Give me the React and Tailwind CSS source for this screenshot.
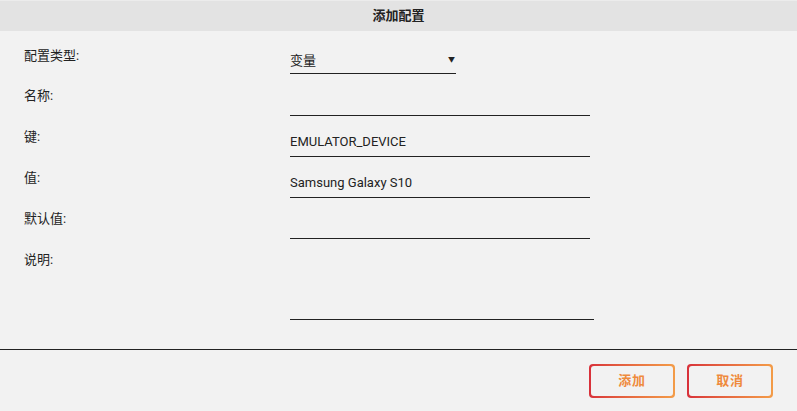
import React, { useState } from 'react'

const font = { fontFamily: 'Roboto, "Noto Sans CJK SC", sans-serif' }

const Field = ({ label, children, rowClass = 'h-[41px]' }) => (
  <div className={`flex ${rowClass}`}>
    <div className="w-[266px] pt-[1px] text-[13px] text-[#222]">{label}</div>
    <div className="flex-1">{children}</div>
  </div>
)

const TextInput = ({ value }) => (
  <div className="mt-[5px] w-[300px] h-[26px] border-b-[1.5px] border-[#222] flex items-end pb-[5px] text-[13px] text-[#222]">
    {value}
  </div>
)

const GradientButton = ({ children }) => (
  <button className="w-[86px] h-[34px] p-[2px] rounded-[4px] bg-gradient-to-r from-[#d8303a] to-[#f39c48]">
    <span className="flex items-center justify-center w-full h-full rounded-[3px] bg-[#f2f2f2] text-[13px] font-bold text-[#ef8a3c] tracking-wider">
      {children}
    </span>
  </button>
)

export default function App() {
  const [type] = useState('变量')

  return (
    <div className="w-[797px] h-[411px] bg-[#f2f2f2] flex flex-col" style={font}>
      <div className="h-[31px] bg-[#e3e3e3] border-t border-[#ececec] flex items-center justify-center text-[13px] font-bold text-[#222]">
        添加配置
      </div>

      <div className="flex flex-col pl-[24px] pt-[14px] h-[318px]">
        <Field label="配置类型:" rowClass="h-[40px]">
          <div className="mt-[8px] w-[166px] h-[21px] border-b-[1.5px] border-[#222] flex items-start justify-between text-[13px] text-[#222]">
            <span className="-mt-[2px]">{type}</span>
            <span className="text-[7px] pr-[1px] pt-[2px]">▼</span>
          </div>
        </Field>
        <Field label="名称:">
          <TextInput value="" />
        </Field>
        <Field label="键:">
          <TextInput value="EMULATOR_DEVICE" />
        </Field>
        <Field label="值:">
          <TextInput value="Samsung Galaxy S10" />
        </Field>
        <Field label="默认值:">
          <TextInput value="" />
        </Field>
        <Field label="说明:" rowClass="h-[80px]">
          <div className="mt-[5px] w-[304px] h-[66px] border-b-[1.5px] border-[#222]" />
        </Field>
      </div>

      <div className="border-t-[1.5px] border-[#222]" />

      <div className="flex justify-end gap-[12px] pr-[24px] pt-[14px]">
        <GradientButton>添加</GradientButton>
        <GradientButton>取消</GradientButton>
      </div>
    </div>
  )
}
